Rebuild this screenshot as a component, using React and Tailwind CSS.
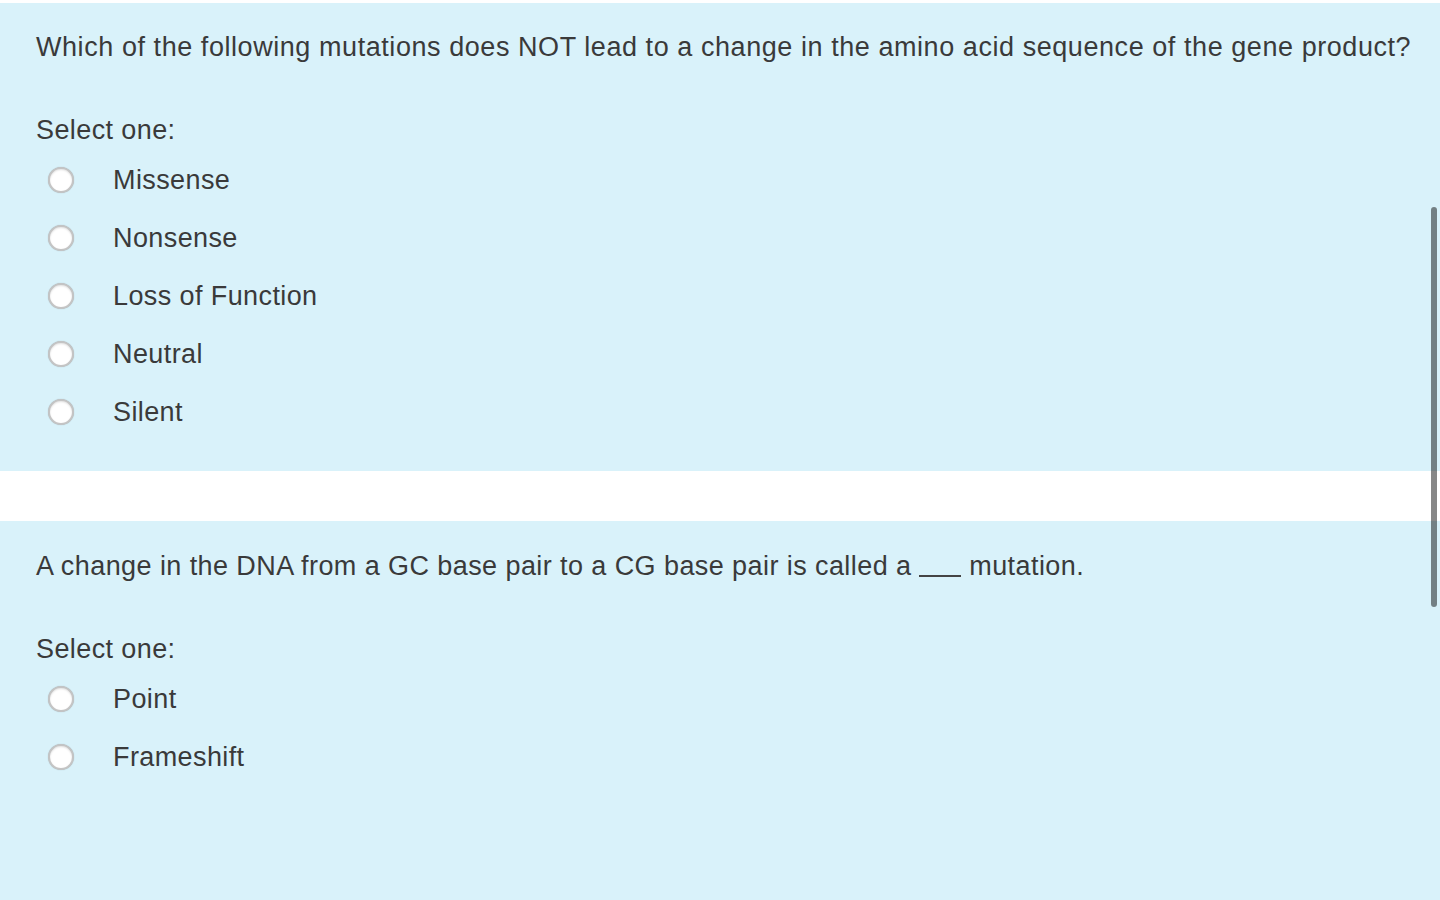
import React from "react";

const font = { fontFamily: '"Liberation Sans", Arial, sans-serif' };

function Radio() {
  return (
    <span className="block w-[26px] h-[26px] rounded-full bg-white border-[2px] border-[#c4c4c4] shadow-[inset_0_1px_2px_rgba(0,0,0,0.12),0_0_1px_rgba(0,0,0,0.25)]" />
  );
}

function Option({ label }) {
  return (
    <label className="flex items-center h-[58px]">
      <span className="w-[77px] pl-[12px] flex items-center">
        <Radio />
      </span>
      <span className="text-[27px] leading-[40px] tracking-[0.4px] text-[#3a3a3a]">{label}</span>
    </label>
  );
}

function Question({ text, options, className, track }) {
  return (
    <div className={"bg-[#d9f2fa] pl-[36px] pt-[24px] " + className}>
      <div className={"text-[27px] leading-[40px] text-[#3a3a3a] whitespace-nowrap " + track}>{text}</div>
      <div className="mt-[43px] text-[27px] leading-[40px] tracking-[0.4px] text-[#3a3a3a]">Select one:</div>
      <div className="mt-[1px] flex flex-col">
        {options.map((o) => (
          <Option key={o} label={o} />
        ))}
      </div>
    </div>
  );
}

export default function App() {
  return (
    <div className="relative w-[1440px] h-[900px] overflow-hidden bg-white" style={font}>
      <div className="h-[3px] bg-white" />
      <Question
        className="h-[468px]"
        track="tracking-[0.56px]"
        text="Which of the following mutations does NOT lead to a change in the amino acid sequence of the gene product?"
        options={["Missense", "Nonsense", "Loss of Function", "Neutral", "Silent"]}
      />
      <div className="h-[50px] bg-white" />
      <Question
        className="h-[379px] pt-[25px]"
        track="tracking-[0.42px]"
        text={
          <>
            A change in the DNA from a GC base pair to a CG base pair is called a{" "}
            <span className="inline-block w-[42px] border-b-[2px] border-[#444] translate-y-[2px] align-baseline"></span>{" "}
            mutation.
          </>
        }
        options={["Point", "Frameshift"]}
      />
      <div className="absolute left-[1431px] top-[207px] w-[6px] h-[400px] rounded-full bg-[rgba(0,0,0,0.47)]" />
    </div>
  );
}
